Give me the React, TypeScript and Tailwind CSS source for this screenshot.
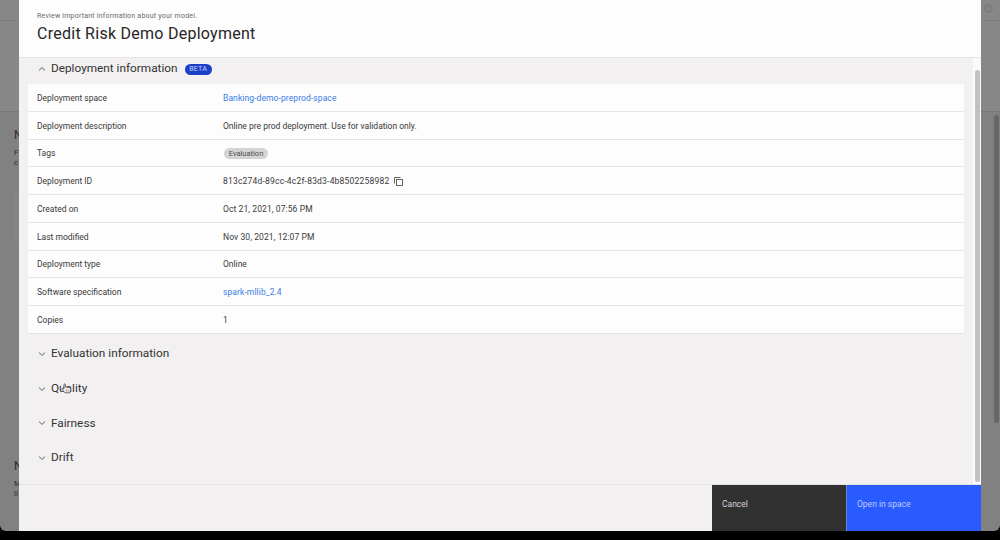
import { useState } from 'react';
import { clsx } from 'clsx';

type Row = {
    label: string;
    value: string;
    kind?: 'link' | 'tag' | 'copy' | 'date';
};

const rows: Row[] = [
    { label: 'Deployment space', value: 'Banking-demo-preprod-space', kind: 'link' },
    { label: 'Deployment description', value: 'Online pre prod deployment. Use for validation only.' },
    { label: 'Tags', value: 'Evaluation', kind: 'tag' },
    { label: 'Deployment ID', value: '813c274d-89cc-4c2f-83d3-4b8502258982', kind: 'copy' },
    { label: 'Created on', value: 'Oct 21, 2021, 07:56 PM', kind: 'date' },
    { label: 'Last modified', value: 'Nov 30, 2021, 12:07 PM', kind: 'date' },
    { label: 'Deployment type', value: 'Online' },
    { label: 'Software specification', value: 'spark-mllib_2.4', kind: 'link' },
    { label: 'Copies', value: '1' },
];

const sections = ['Evaluation information', 'Quality', 'Fairness', 'Drift'];

function Chevron({ up = false }: { up?: boolean }) {
    return (
        <svg className={clsx('ml-[1px] h-2 w-2 shrink-0', up && 'rotate-180')} viewBox="0 0 8 8" fill="none" stroke="#555" strokeWidth="0.9">
            <path d="M1 2.6 4 5.4 7 2.6" />
        </svg>
    );
}

function CopyIcon() {
    return (
        <svg className="ml-[5px] h-[9px] w-[9px]" viewBox="0 0 9 9" fill="none" stroke="#555" strokeWidth="0.9">
            <rect x="2.5" y="2.5" width="6" height="6" />
            <path d="M0.5 6.5V0.5H6.5" />
        </svg>
    );
}

function HandCursor() {
    return (
        <svg className="absolute top-[12px] left-[33px] h-[11px] w-[11px]" viewBox="0 0 11 11" fill="#f2f0f1" stroke="#444" strokeWidth="0.8">
            <path d="M3 6V1.3Q3.7 0.4 4.4 1.3V4L9 4.8Q10 5.2 9.7 6.5L8.9 9.8H4L1 6.4Q1 5.2 2 5.5Z" />
            <path d="M5.5 6.5V8.5M7.2 6.5V8.5" strokeWidth="0.5" />
        </svg>
    );
}

function Value({ row }: { row: Row }) {
    if (row.kind === 'link') {
        return <a className="tracking-[0.09px] text-[#3b7ce8]">{row.value}</a>;
    }
    if (row.kind === 'tag') {
        return <span className="ml-[1px] flex h-[11px] w-[44px] items-center justify-center rounded-full bg-[#d5d4d5] text-[7.5px] text-[#505050]">{row.value}</span>;
    }
    return (
        <>
            <span className={clsx(row.kind === 'copy' && 'tracking-[0.2px]', row.kind === 'date' && 'tracking-[0.1px]')}>{row.value}</span>
            {row.kind === 'copy' && <CopyIcon />}
        </>
    );
}

function Backdrop() {
    return (
        <div className="flex h-[531px] flex-col overflow-hidden rounded-b-md bg-[#828182] text-[#2b2b2b]">
            <div className="flex h-[21px] items-start justify-end border-b border-[#7f7e7f] bg-[#888788] pt-1 pr-[7px]">
                <svg className="h-[9px] w-[9px]" viewBox="0 0 9 9" fill="none" stroke="#737273" strokeWidth="0.9">
                    <circle cx="4.5" cy="4.5" r="3.8" />
                    <path d="M3.3 3.5Q4.5 1.8 5.6 3.4Q5.5 4.2 4.5 4.8V5.5M4.5 6.4V7" />
                </svg>
            </div>
            <div className="h-[91px] border-b border-[#7a797a] bg-[#888788]" />
            <div className="h-[330px] pt-[15px] pl-3.5">
                <div className="text-xs leading-4">N</div>
                <div className="mt-[5px] text-[8px] leading-[10px]">F<br />c</div>
                <div className="mt-[24px] h-[50px] w-10 bg-[#868586]" />
            </div>
            <div className="pt-4 pl-3.5">
                <div className="text-xs leading-4">N</div>
                <div className="mt-[5px] text-[8px] leading-[10px]">M<br />li</div>
            </div>
        </div>
    );
}

export default function App() {
    const [open, setOpen] = useState(true);

    return (
        <div className="relative h-[540px] w-[1000px] overflow-hidden bg-black font-[Roboto,'Open_Sans',sans-serif] text-[#3a3a3a]">
            <Backdrop />
            <div className="absolute top-[115px] right-[1px] h-[308px] w-[5px] rounded-full bg-[#686768]" />

            <div className="absolute top-0 left-[19px] flex h-[531px] w-[962px] flex-col bg-[#f2f0f1]">
                <header className="h-[57px] bg-[#fdfdfd] pt-2.5 pl-[18px]">
                    <p className="text-[7px] leading-3 tracking-[0.22px] text-[#686868]">Review important information about your model.</p>
                    <h1 className="text-base leading-[23px] tracking-[0.26px] text-[#262626]">Credit Risk Demo Deployment</h1>
                </header>

                <div className="flex h-[428px] border-y border-[#e5e3e4]">
                    <div className="flex-1 pr-[9px] pl-[9px]">
                        <button onClick={() => setOpen(!open)} className="flex h-[26px] w-full items-center pb-1 pl-[9px] text-[11.8px] text-[#333]">
                            <Chevron up={open} />
                            <span className="ml-[5px]">Deployment information</span>
                            <span className="ml-[7px] flex h-[11px] w-[27px] items-center justify-center rounded-full bg-[#1c3fc8] text-[7px] tracking-[0.2px] text-[#c3d1f5]">BETA</span>
                        </button>

                        {open && (
                            <div className="text-[8.5px]">
                                {rows.map((row) => (
                                    <div key={row.label} className="flex h-[27.75px] items-center border-b border-[#e7e6e7] bg-[#fdfdfd] pt-[1.5px] pl-[9px]">
                                        <div className="w-[186px]">{row.label}</div>
                                        <Value row={row} />
                                    </div>
                                ))}
                            </div>
                        )}

                        <div className="pt-[3px]">
                            {sections.map((title) => (
                                <button key={title} className="relative flex h-[34.7px] w-full items-center pl-[9px] text-[11.8px] text-[#333]">
                                    <Chevron />
                                    <span className="ml-[5px]">{title}</span>
                                    {title === 'Quality' && <HandCursor />}
                                </button>
                            ))}
                        </div>
                    </div>
                    <div className="flex w-[8px] shrink-0 flex-col items-center bg-[#fafafa] pt-3 pb-0.5">
                        <div className="w-[5px] flex-1 rounded-full bg-[#c1c1c1]" />
                    </div>
                </div>

                <footer className="flex h-[46px] justify-end text-[8.5px]">
                    <button className="flex w-[134px] items-start bg-[#323132] pt-[13px] pl-2.5 text-[#d2d2d2]">Cancel</button>
                    <button className="flex w-[135px] items-start border-l border-[#6c86c8] bg-[#2a5bff] pt-[13px] pl-2.5 text-[#b9cdff]">Open in space</button>
                </footer>
            </div>
        </div>
    );
}
